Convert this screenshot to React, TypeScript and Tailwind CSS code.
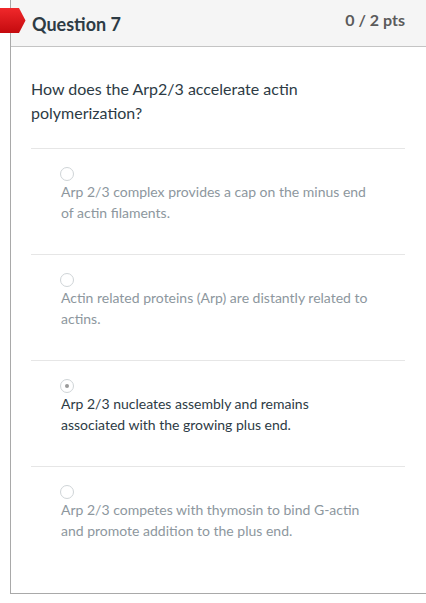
import React from 'react';

const options = [
  { text: 'Arp 2/3 complex provides a cap on the minus end of actin filaments.', selected: false },
  { text: 'Actin related proteins (Arp) are distantly related to actins.', selected: false },
  { text: 'Arp 2/3 nucleates assembly and remains associated with the growing plus end.', selected: true },
  { text: 'Arp 2/3 competes with thymosin to bind G-actin and promote addition to the plus end.', selected: false },
];

function Flag() {
  return (
    <svg className="absolute left-0 top-[8px]" width="26" height="26" viewBox="0 0 26 26">
      <defs>
        <linearGradient id="flagRed" x1="0" y1="0" x2="0" y2="1">
          <stop offset="0" stopColor="#f0282b" />
          <stop offset="1" stopColor="#c40a0e" />
        </linearGradient>
      </defs>
      <path d="M0 0 H19 L25.5 12.5 L19 25 H0 Z" fill="url(#flagRed)" />
    </svg>
  );
}

export default function App() {
  return (
    <div className="relative h-[603px] w-[426px] overflow-hidden bg-white font-['Lato','Noto_Sans',sans-serif]">
      <div className="ml-[10px] w-[417px] border-b border-l border-[#a9a9a9]">
        {/* header */}
        <div className="flex h-[47px] justify-between border-b border-[#c4c4c4] bg-[#f5f5f5] pl-[21px] pr-[22px]">
          <h2 className="pt-[11px] text-[18px] leading-[26px] font-bold text-[#2d3b45]">Question 7</h2>
          <div className="pt-[9px] text-[16px] leading-[22px] font-bold text-[#5b5b5b]">0 / 2 pts</div>
        </div>

        {/* body */}
        <div className="pl-[20px] pt-[30px] pb-[21px]">
          <p className="mb-[23px] w-[374px] text-[16px] leading-[24px] text-[#2d3b45]">
            How does the Arp2/3 accelerate actin polymerization?
          </p>
          <div className="w-[374px]">
            {options.map((o, i) => (
              <div key={i} className="border-t border-[#e6e6e6] pt-[18px] pb-[31px] pl-[29px] pr-[30px]">
                <div className="flex h-[14px] w-[14px] items-center justify-center rounded-full border border-[#cfd4d7] bg-white">
                  {o.selected && <div className="h-[4px] w-[4px] rounded-full bg-[#9a9a9a]" />}
                </div>
                <div
                  className={
                    o.selected
                      ? 'pl-[1px] text-[14px] leading-[21px] text-[#2d3b45]'
                      : 'pl-[1px] text-[14px] leading-[21px] text-[#8d979e]'
                  }
                >
                  {o.text}
                </div>
              </div>
            ))}
          </div>
        </div>
      </div>
      <Flag />
    </div>
  );
}
